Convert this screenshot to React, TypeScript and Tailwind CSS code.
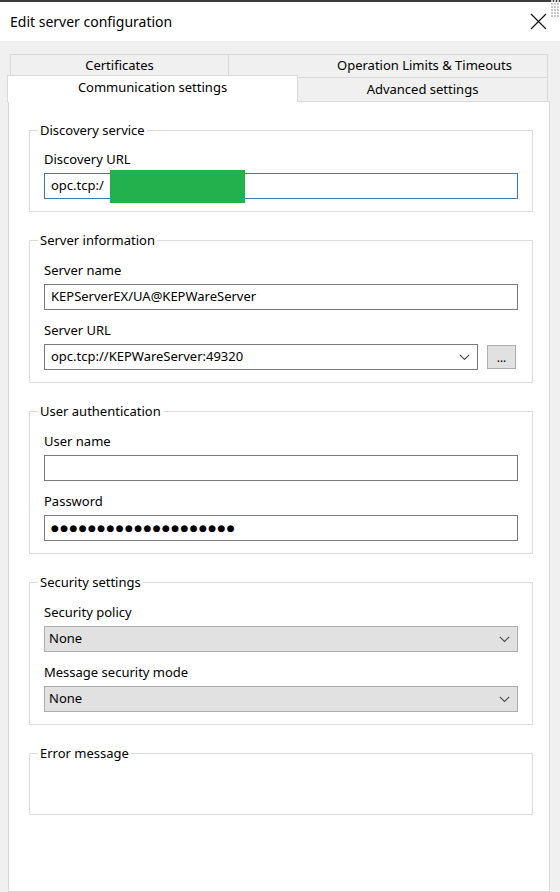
import React from "react";

const FONT = "font-['Noto_Sans','DejaVu_Sans',sans-serif]";

const Chevron: React.FC = () => (
  <svg width="11" height="7" viewBox="0 0 11 7" className="shrink-0">
    <polyline
      points="0.8,0.8 5.5,5.5 10.2,0.8"
      fill="none"
      stroke="#4f4f4f"
      strokeWidth="1.2"
    />
  </svg>
);

const CloseIcon: React.FC = () => (
  <svg width="17" height="17" viewBox="0 0 17 17">
    <path d="M1 1 L16 16 M16 1 L1 16" stroke="#111" strokeWidth="1.2" />
  </svg>
);

// little resize grip sitting in the top right corner of the capture
const Grip: React.FC = () => (
  <svg
    width="9"
    height="18"
    viewBox="0 0 9 18"
    className="absolute right-0 top-0"
  >
    {[0, 3, 6].map((x) =>
      [0, 3, 6, 9, 12, 15].map((y) => (
        <rect key={`${x}-${y}`} x={x} y={y} width="2" height="2" fill="#c9c9c9" />
      ))
    )}
  </svg>
);

const Label: React.FC<{ children: React.ReactNode; first?: boolean }> = ({
  children,
  first,
}) => (
  <div
    className={`h-[18px] text-[13px] leading-[18px] text-black ${
      first ? "" : "mt-[11px]"
    }`}
  >
    {children}
  </div>
);

const TextBox: React.FC<{ value?: string; focused?: boolean; children?: React.ReactNode }> = ({
  value,
  focused,
  children,
}) => (
  <div
    className={`relative mt-[5px] flex h-[26px] w-[474px] items-center bg-white px-[6px] text-[13px] text-black ${
      focused ? "border border-[#3a7ab3]" : "border border-[#7a7a7a]"
    }`}
  >
    {value}
    {children}
  </div>
);

const DropDown: React.FC<{ value: string }> = ({ value }) => (
  <div className="mt-[5px] flex h-[26px] w-[474px] items-center justify-between border border-[#adadad] bg-[#e1e1e1] pl-[4px] pr-[7px] text-[13px] text-black">
    <span>{value}</span>
    <Chevron />
  </div>
);

const Group: React.FC<{
  title: string;
  children?: React.ReactNode;
  className?: string;
  bodyClassName?: string;
}> = ({ title, children, className = "", bodyClassName = "pt-[12px] pb-[12px]" }) => (
  <fieldset className={`mx-[20px] w-[504px] border border-[#dcdcdc] ${className}`}>
    <legend className="ml-[8px] px-[2px] text-[13px] leading-[18px] text-black">
      {title}
    </legend>
    <div className={`flex flex-col px-[14px] ${bodyClassName}`}>{children}</div>
  </fieldset>
);

export default function App() {
  return (
    <div className={`relative flex h-[892px] w-[560px] flex-col overflow-hidden bg-[#f0f0f0] ${FONT}`}>
      {/* title bar */}
      <div className="flex h-[41px] shrink-0 items-center justify-between border-t-2 border-[#3c3c3c] bg-white pl-[10px] pr-[13px]">
        <span className="text-[14px] text-black">Edit server configuration</span>
        <CloseIcon />
      </div>
      <Grip />

      <div className="flex flex-1 flex-col pt-[13px] text-[13px] text-black">
        {/* back row of tabs */}
        <div className="ml-[10px] flex h-[23px] w-[538px]">
          <div className="flex w-[218px] items-center justify-center border-l border-t border-[#d9d9d9] bg-[#f0f0f0]">
            Certificates
          </div>
          <div className="flex flex-1 items-center border-l border-r border-t border-[#d9d9d9] bg-[#f0f0f0] pl-[108px]">
            Operation Limits &amp; Timeouts
          </div>
        </div>
        {/* front row of tabs */}
        <div className="flex h-[24px] items-start">
          <div className="relative z-10 -mt-[2px] ml-[7px] flex h-[27px] w-[291px] items-center justify-center border-l border-r border-t border-[#d9d9d9] bg-white pb-[2px]">
            Communication settings
          </div>
          <div className="flex h-[24px] w-[250px] items-center justify-center border-r border-t border-[#d9d9d9] bg-[#f0f0f0]">
            Advanced settings
          </div>
        </div>

        {/* tab page */}
        <div className="ml-[8px] flex w-[542px] flex-1 flex-col border border-[#d9d9d9] bg-white pt-[19px]">
          <Group title="Discovery service" bodyClassName="pt-[11px] pb-[12px]">
            <Label first>Discovery URL</Label>
            <TextBox value="opc.tcp:/" focused>
              <div className="absolute left-[65px] top-[-4px] h-[33px] w-[135px] bg-[#22b14c]" />
            </TextBox>
          </Group>

          <Group title="Server information" className="mt-[19px]">
            <Label first>Server name</Label>
            <TextBox value="KEPServerEX/UA@KEPWareServer" />
            <Label>Server URL</Label>
            <div className="mt-[5px] flex items-center">
              <div className="flex h-[26px] w-[434px] items-center justify-between border border-[#7a7a7a] bg-white pl-[6px] pr-[7px]">
                <span>opc.tcp://KEPWareServer:49320</span>
                <Chevron />
              </div>
              <button className="ml-[9px] flex h-[24px] w-[29px] items-end justify-center border border-[#adadad] bg-[#e1e1e1] pb-[4px] text-[12px] leading-[12px] text-black">
                ...
              </button>
            </div>
          </Group>

          <Group title="User authentication" className="mt-[19px]">
            <Label first>User name</Label>
            <TextBox />
            <Label>Password</Label>
            <TextBox>
              <span className="text-[9px] tracking-[1.4px]">
                {"●".repeat(20)}
              </span>
            </TextBox>
          </Group>

          <Group title="Security settings" className="mt-[19px]">
            <Label first>Security policy</Label>
            <DropDown value="None" />
            <Label>Message security mode</Label>
            <DropDown value="None" />
          </Group>

          <Group title="Error message" className="mt-[19px]" bodyClassName="h-[52px]" />
        </div>
      </div>
    </div>
  );
}
